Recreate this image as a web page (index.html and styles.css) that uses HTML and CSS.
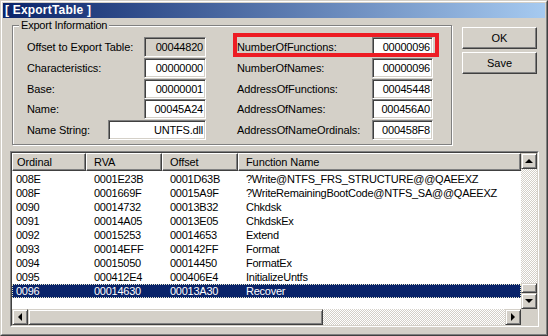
FILE: index.html
```html
<!DOCTYPE html>
<html>
<head>
<meta charset="utf-8">
<link rel="stylesheet" href="styles.css">
</head>
<body>
<div class="window">
  <div class="frame">
    <div class="titlebar">[ ExportTable ]</div>
    <div class="top">
      <div class="group">
        <span class="legend">Export Information</span>
        <div class="fields left">
          <span class="lbl">Offset to Export Table:</span><div class="box ro">00044820</div>
          <span class="lbl">Characteristics:</span><div class="box">00000000</div>
          <span class="lbl">Base:</span><div class="box">00000001</div>
          <span class="lbl">Name:</span><div class="box">00045A24</div>
          <div class="wide-row"><span class="lbl">Name String:</span><div class="box">UNTFS.dll</div></div>
        </div>
        <div class="fields right">
          <span class="lbl">NumberOfFunctions:</span><div class="box">00000096</div>
          <span class="lbl">NumberOfNames:</span><div class="box">00000096</div>
          <span class="lbl">AddressOfFunctions:</span><div class="box">00045448</div>
          <span class="lbl">AddressOfNames:</span><div class="box">000456A0</div>
          <span class="lbl">AddressOfNameOrdinals:</span><div class="box">000458F8</div>
        </div>
        <div class="highlight"></div>
      </div>
      <div class="buttons">
        <button class="btn">OK</button>
        <button class="btn">Save</button>
      </div>
    </div>
    <div class="list">
      <div class="list-inner">
        <div class="list-main">
          <div class="header">
            <div class="hcell c1">Ordinal</div>
            <div class="hcell c2">RVA</div>
            <div class="hcell c3">Offset</div>
            <div class="hcell c4">Function Name</div>
          </div>
          <div class="rows">
            <div class="row"><span class="c1">008E</span><span class="c2">0001E23B</span><span class="c3">0001D63B</span><span class="c4">?Write@NTFS_FRS_STRUCTURE@@QAEEXZ</span></div>
            <div class="row"><span class="c1">008F</span><span class="c2">0001669F</span><span class="c3">00015A9F</span><span class="c4">?WriteRemainingBootCode@NTFS_SA@@QAEEXZ</span></div>
            <div class="row"><span class="c1">0090</span><span class="c2">00014732</span><span class="c3">00013B32</span><span class="c4">Chkdsk</span></div>
            <div class="row"><span class="c1">0091</span><span class="c2">00014A05</span><span class="c3">00013E05</span><span class="c4">ChkdskEx</span></div>
            <div class="row"><span class="c1">0092</span><span class="c2">00015253</span><span class="c3">00014653</span><span class="c4">Extend</span></div>
            <div class="row"><span class="c1">0093</span><span class="c2">00014EFF</span><span class="c3">000142FF</span><span class="c4">Format</span></div>
            <div class="row"><span class="c1">0094</span><span class="c2">00015050</span><span class="c3">00014450</span><span class="c4">FormatEx</span></div>
            <div class="row"><span class="c1">0095</span><span class="c2">000412E4</span><span class="c3">000406E4</span><span class="c4">InitializeUntfs</span></div>
            <div class="row sel"><span class="c1">0096</span><span class="c2">00014630</span><span class="c3">00013A30</span><span class="c4">Recover</span></div>
          </div>
        </div>
        <div class="vscroll">
          <div class="sbtn"><span class="arrow up"></span></div>
          <div class="track"></div>
          <div class="thumb vthumb"></div>
          <div class="sbtn"><span class="arrow down"></span></div>
        </div>
        <div class="hscroll">
          <div class="sbtn"><span class="arrow left"></span></div>
          <div class="thumb hthumb"></div>
          <div class="track"></div>
          <div class="sbtn"><span class="arrow right"></span></div>
        </div>
        <div class="corner"></div>
      </div>
    </div>
  </div>
</div>
</body>
</html>
```
FILE: styles.css
```css
* { box-sizing: border-box; }
html, body { margin: 0; padding: 0; }
body {
  width: 548px;
  height: 336px;
  overflow: hidden;
  background: #d4d0c8;
  font-family: "Liberation Sans", Arial, sans-serif;
  font-size: 11px;
  color: #000;
}
.window {
  width: 548px;
  height: 336px;
  border: 1px solid;
  border-color: #d4d0c8 #404040 #404040 #d4d0c8;
}
.frame {
  height: 100%;
  border: 1px solid;
  border-color: #fff #808080 #808080 #fff;
  padding: 1px;
  display: flex;
  flex-direction: column;
}
.titlebar {
  height: 15px;
  flex: none;
  background: linear-gradient(to right, #0a246a, #a6caf0);
  color: #fff;
  font-weight: bold;
  font-size: 12px;
  line-height: 15px;
  padding-left: 2px;
  white-space: pre;
  letter-spacing: 0.2px;
}
.top {
  display: flex;
  flex: none;
  margin-top: 7px;
  margin-left: 9px;
}
.group {
  position: relative;
  width: 440px;
  height: 120px;
  border: 1px solid #808080;
  box-shadow: inset 1px 1px 0 #fff, 1px 1px 0 #fff;
  padding: 11px 0 0 14px;
  display: flex;
  gap: 31px;
}
.legend {
  position: absolute;
  left: 6px;
  top: -7px;
  padding: 0 2px;
  line-height: 13px;
  background: #d4d0c8;
  letter-spacing: -0.2px;
}
.fields {
  display: grid;
  grid-template-rows: 21px 21px 20px 21px 20px;
}
.fields.left { grid-template-columns: 117px 62px; }
.fields.right { grid-template-columns: 135px 61px; }
.lbl {
  height: 20px;
  line-height: 20px;
  white-space: nowrap;
  letter-spacing: -0.1px;
}
.box {
  height: 20px;
  background: #fff;
  border: 1px solid;
  border-color: #808080 #fff #fff #808080;
  box-shadow: inset 1px 1px 0 #404040, inset -1px -1px 0 #d4d0c8;
  text-align: right;
  padding-right: 2px;
  line-height: 18px;
  white-space: nowrap;
  letter-spacing: -0.2px;
}
.box.ro { background: #d4d0c8; }
.wide-row {
  grid-column: 1 / 3;
  display: flex;
  justify-content: space-between;
}
.wide-row .box { width: 98px; }
.highlight {
  position: absolute;
  left: 220px;
  top: 7px;
  width: 206px;
  height: 24px;
  border: 4px solid #ed1c24;
}
.buttons {
  display: flex;
  flex-direction: column;
  gap: 3px;
  margin-left: 10px;
  margin-top: 2px;
}
.btn {
  width: 75px;
  height: 22px;
  padding: 0;
  margin: 0;
  font: inherit;
  color: #000;
  background: #d4d0c8;
  border: 1px solid;
  border-color: #fff #404040 #404040 #fff;
  box-shadow: inset -1px -1px 0 #808080;
  line-height: 19px;
}
.list {
  flex: none;
  margin: 6px 0 0 7px;
  width: 529px;
  height: 176px;
  border: 1px solid;
  border-color: #808080 #fff #fff #808080;
}
.list-inner {
  height: 100%;
  border: 1px solid;
  border-color: #404040 #d4d0c8 #d4d0c8 #404040;
  background: #fff;
  display: grid;
  grid-template-columns: 1fr 16px;
  grid-template-rows: 1fr 16px;
}
.list-main { overflow: hidden; min-width: 0; }
.header { display: flex; height: 18px; }
.hcell {
  height: 18px;
  background: #d4d0c8;
  border: 1px solid;
  border-color: #fff #404040 #404040 #fff;
  box-shadow: inset -1px -1px 0 #808080;
  line-height: 16px;
  padding-left: 7px;
  white-space: nowrap;
  letter-spacing: -0.1px;
}
.hcell.c1 { width: 74px; padding-left: 4px; }
.hcell.c2, .hcell.c3 { width: 76px; }
.hcell.c4 { flex: 1; }
.rows { padding-top: 1px; }
.row {
  display: flex;
  height: 14px;
  line-height: 14px;
  white-space: nowrap;
  letter-spacing: -0.25px;
}
.row .c1 { width: 74px; padding-left: 4px; }
.row .c2, .row .c3 { width: 76px; padding-left: 8px; }
.row .c4 { flex: 1; padding-left: 8px; }
.row.sel {
  background: #0a246a;
  color: #fff;
  outline: 1px dotted #e8e8c8;
  outline-offset: -1px;
}
.vscroll { display: flex; flex-direction: column; }
.hscroll { display: flex; }
.sbtn {
  width: 16px;
  height: 16px;
  flex: none;
  background: #d4d0c8;
  border: 1px solid;
  border-color: #d4d0c8 #404040 #404040 #d4d0c8;
  box-shadow: inset 1px 1px 0 #fff, inset -1px -1px 0 #808080;
  display: flex;
  align-items: center;
  justify-content: center;
}
.track {
  flex: 1;
  background-color: #fff;
  background-image: conic-gradient(#d4d0c8 25%, #fff 0 50%, #d4d0c8 0 75%, #fff 0);
  background-size: 2px 2px;
}
.thumb {
  flex: none;
  background: #d4d0c8;
  border: 1px solid;
  border-color: #d4d0c8 #404040 #404040 #d4d0c8;
  box-shadow: inset 1px 1px 0 #fff, inset -1px -1px 0 #808080;
}
.vthumb { height: 10px; }
.hthumb { width: 295px; }
.corner { background: #d4d0c8; }
.arrow { width: 0; height: 0; display: block; }
.arrow.up { border-left: 4px solid transparent; border-right: 4px solid transparent; border-bottom: 4px solid #000; }
.arrow.down { border-left: 4px solid transparent; border-right: 4px solid transparent; border-top: 4px solid #000; }
.arrow.left { border-top: 4px solid transparent; border-bottom: 4px solid transparent; border-right: 4px solid #000; }
.arrow.right { border-top: 4px solid transparent; border-bottom: 4px solid transparent; border-left: 4px solid #000; }
```
